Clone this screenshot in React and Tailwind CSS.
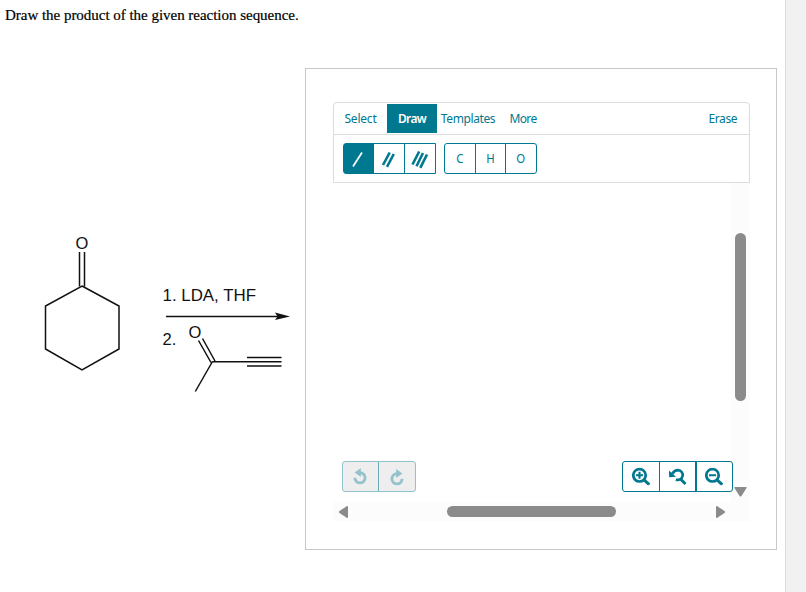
const TABS = [
  { name: 'Select', className: 'w-[53px] tracking-[-0.2px]' },
  { name: 'Draw', className: 'w-[50px] bg-[#00788f] text-white font-semibold tracking-[-0.7px]' },
  { name: 'Templates', className: 'w-[62px] tracking-[-0.4px]' },
  { name: 'More', className: 'w-12 tracking-[-0.6px]' },
]

const ATOMS = ['C', 'H', 'O']

function ReactionScheme() {
  return (
    <svg className="w-[305px] h-[200px] shrink-0 mt-[162px]" viewBox="0 230 305 200" fill="none" stroke="#111" strokeWidth="1.5">
      <path d="M82 286L119 306V349L82 370L45.5 349V306Z" />
      <path d="M79.5 252V286.5M84.5 252V286.5" />

      <path d="M166 316.5H280" />
      <path d="M290 316.5L275 312.5L277.5 316.5L275 320Z" fill="#111" stroke="none" />

      <path d="M198.5 340.5L211 362.5M202.5 338.5L215 361M212.5 361.5L195.3 391.5M212.5 361.7H281.5M247 357.5H281.5M247 366H281.5" />

      <g fill="#111" stroke="none" fontFamily="'Liberation Sans', Arial, sans-serif" fontSize="16.5">
        <text x="82" y="248.5" textAnchor="middle">O</text>
        <text x="162.5" y="301" textLength="93.5" lengthAdjust="spacingAndGlyphs">1. LDA, THF</text>
        <text x="162.5" y="344.5">2.</text>
        <text x="194.8" y="337.5" textAnchor="middle">O</text>
      </g>
    </svg>
  )
}

function BondIcon({ count }) {
  return (
    <svg className="block w-[30px] h-[29px]" viewBox="0 0 30 29" fill="none" stroke="currentColor">
      {count === 1 && <path d="M9 22.5L18 8.5" strokeWidth="1.7" />}
      {count === 2 && <path d="M9 21L15.7 8.5M13 22.8L19.8 10" strokeWidth="2.6" />}
      {count === 3 && <path d="M7.5 20.5L14.2 7.5M11.5 22.2L18 9M15.3 23.8L22 10.5" strokeWidth="2.6" />}
    </svg>
  )
}

function RotateIcon({ flip }) {
  return (
    <svg className={flip ? 'size-[18px] translate-y-[0.5px] -scale-x-100' : 'size-[18px] -translate-x-px -translate-y-[0.5px]'} viewBox="0 0 18 18" fill="none">
      <path d="M9 5.2A5.1 5.1 0 1 1 3.9 10.3" stroke="currentColor" strokeWidth="2.9" />
      <path d="M3.6 5.1L9.8 .6V9.6Z" fill="currentColor" />
    </svg>
  )
}

function ZoomIcon({ plus }) {
  return (
    <svg className={plus ? 'size-[18px] -translate-y-[0.5px]' : 'size-[18px] -translate-x-px -translate-y-[0.5px]'} viewBox="0 0 18 18" fill="none" stroke="currentColor">
      <circle cx="7.5" cy="7.8" r="6.2" strokeWidth="2.7" />
      <path d="M12 12.3L17.3 17.2" strokeWidth="3" />
      <path d={plus ? 'M4 7.8H11M7.5 4.3V11.3' : 'M4 7.8H11'} strokeWidth="2.1" />
    </svg>
  )
}

function ResetZoomIcon() {
  return (
    <svg className="size-[18px] -translate-x-[0.5px] -translate-y-[0.5px]" viewBox="0 0 18 18" fill="none" stroke="currentColor">
      <path d="M3.8 6.2C5.2 3.8 6.8 2.6 9.5 2.6A4.9 4.9 0 1 1 7.4 12" strokeWidth="2.7" />
      <path d="M12 11.5L17 16.5" strokeWidth="3" />
      <path d="M.4 2.9L.7 9.8L7.5 9.2Z" fill="currentColor" stroke="none" />
    </svg>
  )
}

function Toolbar() {
  return (
    <div className="h-[81px] border border-[#dcdcdc] rounded-t text-xs text-[#00788f]">
      <div className="h-8 border-b border-[#dcdcdc] flex items-center">
        {TABS.map(tab => (
          <button key={tab.name} className={`h-[29px] pt-px ${tab.className}`}>
            {tab.name}
          </button>
        ))}
        <button className="ml-auto mr-3 pt-px tracking-[-0.45px]">Erase</button>
      </div>
      <div className="flex gap-2 pt-2 pl-[9px]">
        <div className="flex w-[93px] h-[31px] border border-[#00788f] rounded-l-[3px] divide-x divide-[#00788f]">
          <button className="w-[30px] bg-[#00788f] text-white"><BondIcon count={1} /></button>
          <button className="w-[31px]"><BondIcon count={2} /></button>
          <button className="w-[30px]"><BondIcon count={3} /></button>
        </div>
        <div className="flex w-[93px] h-[31px] border border-[#00788f] rounded-[3px] divide-x divide-[#00788f]">
          {ATOMS.map(atom => (
            <button key={atom} className="flex-1 text-xs">
              <span className="inline-block scale-x-95">{atom}</span>
            </button>
          ))}
        </div>
      </div>
    </div>
  )
}

function Canvas() {
  return (
    <div className="h-[338px] flex flex-col">
      <div className="flex h-[319px]">
        <div className="flex-1 flex items-end justify-between pl-[9px] pb-[10px]">
          <div className="flex w-[74px] h-[31px] border border-[#94c2cc] rounded-[3px] bg-[#eee] text-[#94c2cc]">
            <button className="w-[35px] grid place-items-center"><RotateIcon /></button>
            <button className="flex-1 grid place-items-center border-l border-[#6aabb9]"><RotateIcon flip /></button>
          </div>
          <div className="relative z-10 -mr-[2px] flex w-[111px] h-[31px] border border-[#00788f] rounded-[3px] bg-white text-[#00788f]">
            <button className="w-9 grid place-items-center"><ZoomIcon plus /></button>
            <button className="w-9 grid place-items-center border-l border-[#00788f]"><ResetZoomIcon /></button>
            <button className="flex-1 grid place-items-center border-l-2 border-[#00788f]"><ZoomIcon /></button>
          </div>
        </div>
        <div className="w-[19px] bg-[#fcfcfc] flex flex-col items-center justify-between pt-[50px] pb-[5px]">
          <div className="w-[11px] h-[168px] rounded-full bg-[#8b8b8b]" />
          <svg className="w-[13px] h-[10px]" viewBox="0 0 13 10" fill="#8b8b8b">
            <path d="M1 0H12Q13 0 12.5 1L7.5 9Q6.5 10 5.5 9L.5 1Q0 0 1 0Z" />
          </svg>
        </div>
      </div>
      <div className="h-[19px] bg-[#fcfcfc] flex items-center pl-[6px] pr-[25px]">
        <svg className="w-[9px] h-3" viewBox="0 0 9 12" fill="#8b8b8b">
          <path d="M9 1V11Q9 12 8 12L.5 7Q-.5 6 .5 5L8 0Q9 0 9 1Z" />
        </svg>
        <div className="ml-[99px] w-[169px] h-[11px] rounded-full bg-[#8b8b8b]" />
        <svg className="ml-auto w-[9px] h-3" viewBox="0 0 9 12" fill="#8b8b8b">
          <path d="M0 1V11Q0 12 1 12L8.5 7Q9.5 6 8.5 5L1 0Q0 0 0 1Z" />
        </svg>
      </div>
    </div>
  )
}

export default function App() {
  return (
    <div className="flex h-[592px] bg-white overflow-hidden">
      <main className="w-[785px] shrink-0">
        <p className="h-[68px] pt-[5px] pl-[5px] font-['Liberation_Serif',serif] text-[15px] leading-5 tracking-[-0.025px] text-black whitespace-nowrap [-webkit-text-stroke:0.2px_black]">
          Draw the product of the given reaction sequence.
        </p>
        <div className="flex items-start">
          <ReactionScheme />
          <section className="w-[472px] h-[482px] border border-[#c8c8c8] pt-[33px] pl-[27px] pr-[26px] font-['Noto_Sans',sans-serif]">
            <Toolbar />
            <Canvas />
          </section>
        </div>
      </main>
      <aside className="flex-1 border-l border-[#dcdcdc] bg-[#f1f1f1]" />
    </div>
  )
}
